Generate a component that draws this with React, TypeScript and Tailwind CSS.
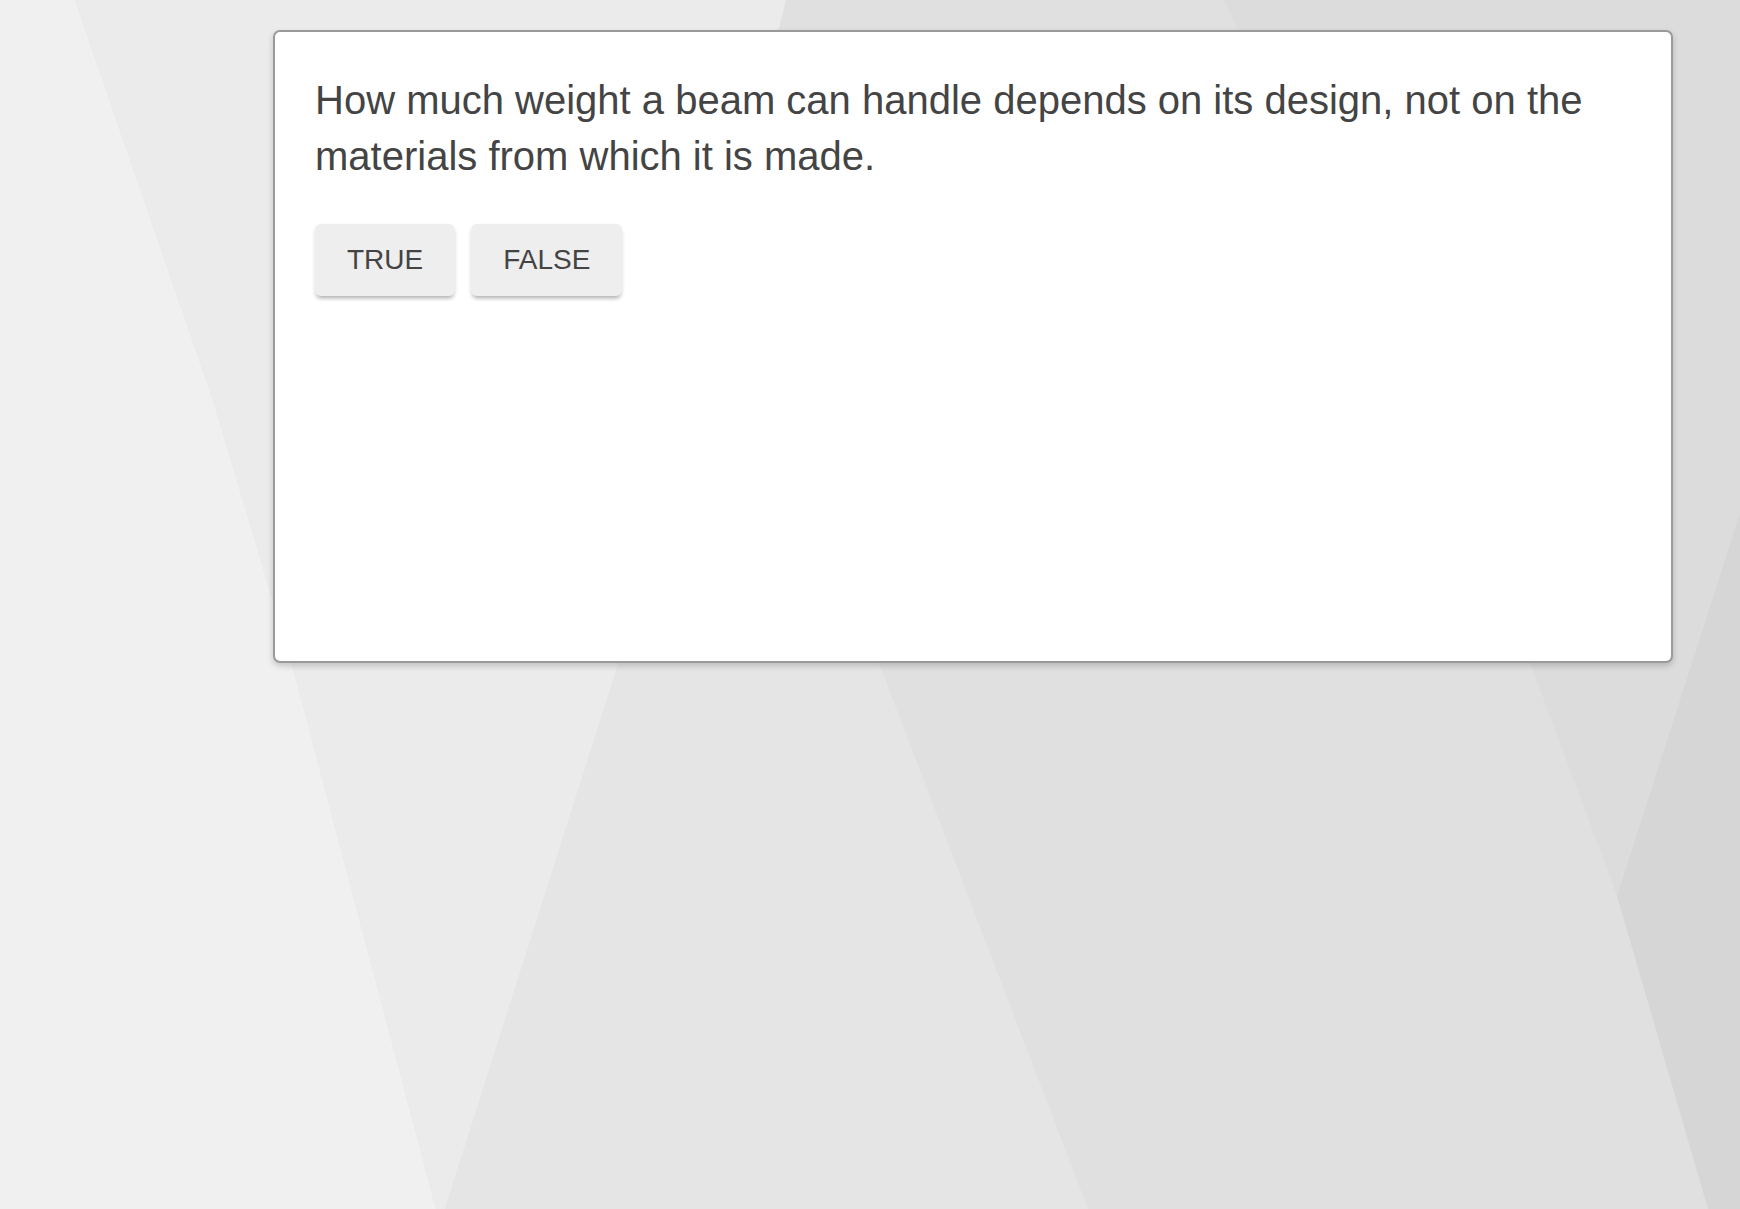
import React from 'react'

// low-poly backdrop behind the question card
const Backdrop = () => (
  <svg
    className="absolute inset-0 w-full h-full"
    viewBox="0 0 1740 1209"
    preserveAspectRatio="none"
  >
    <rect x="0" y="0" width="1740" height="1209" fill="#e0e0e0" />
    <polygon points="0,0 75,0 213,400 293,668 436,1209 0,1209" fill="#f0f0f0" />
    <polygon points="75,0 786,0 617,668 445,1209 436,1209 293,668 213,400" fill="#ebebeb" />
    <polygon points="722,253 880,666 1088,1209 445,1209 617,668" fill="#e5e5e5" />
    <polygon points="1224,0 1740,0 1740,513 1617,896 1532,668" fill="#dcdcdc" />
    <polygon points="1740,513 1617,896 1708,1209 1740,1209" fill="#d6d6d6" />
  </svg>
)

const AnswerButton = ({ label }: { label: string }) => (
  <button className="h-[72px] px-[32px] rounded-[6px] bg-[#eeeeee] text-[28px] text-[#444] uppercase shadow-[0_4px_4px_-2px_rgba(0,0,0,0.28),0_2px_5px_rgba(0,0,0,0.08)] cursor-pointer">
    {label}
  </button>
)

const App = () => {
  return (
    <div className="relative w-full h-screen overflow-hidden font-['Liberation_Sans',Arial,sans-serif]">
      <Backdrop />

      <div className="relative pt-[30px] pl-[273px]">
        {/* Question card */}
        <div className="w-[1400px] h-[633px] bg-white border-2 border-[#9a9a9a] rounded-[7px] shadow-[0_3px_6px_rgba(0,0,0,0.18)] pt-[40px] px-[40px]">
          <p className="text-[40px] leading-[56px] text-[#444]">
            How much weight a beam can handle depends on its design, not on the materials from which it is made.
          </p>

          <div className="flex gap-4 mt-[40px]">
            <AnswerButton label="True" />
            <AnswerButton label="False" />
          </div>
        </div>
      </div>
    </div>
  )
}

export default App
